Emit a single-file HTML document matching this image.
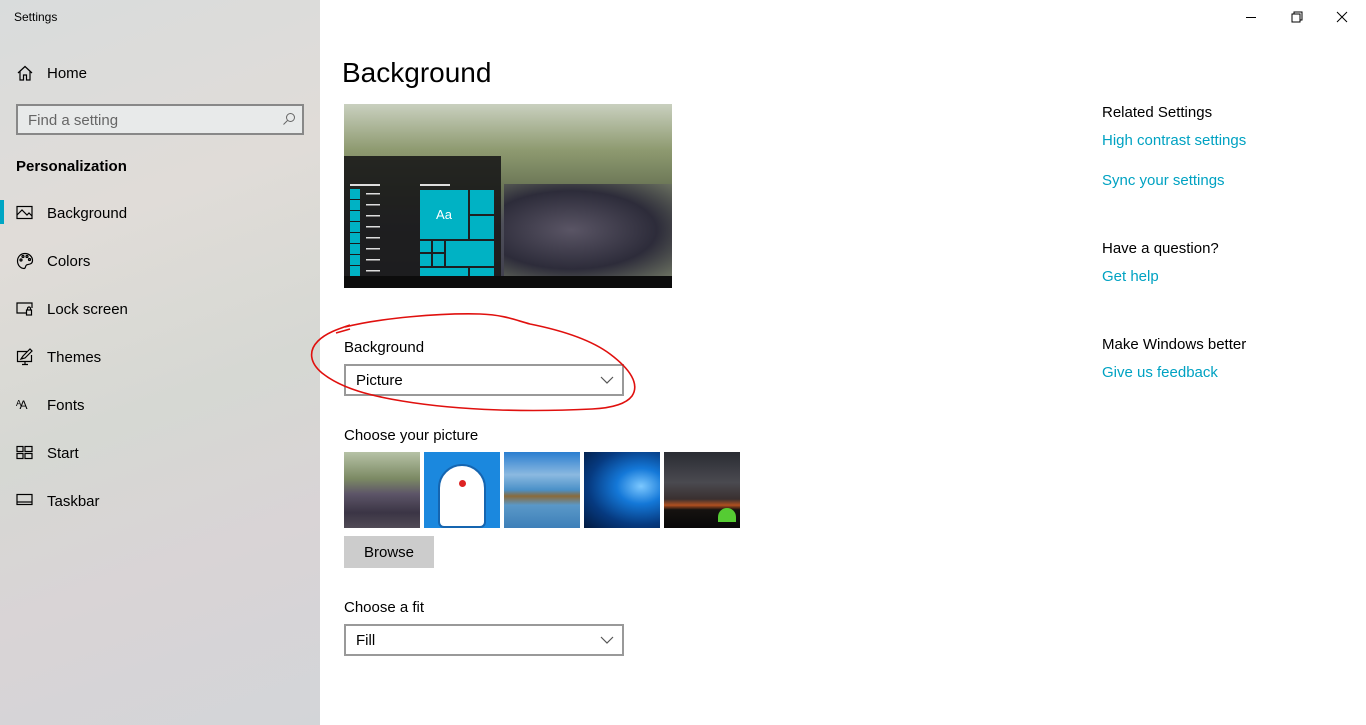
<!DOCTYPE html>
<html><head><meta charset="utf-8"><style>
*{margin:0;padding:0;box-sizing:border-box}
body{width:1366px;height:725px;overflow:hidden;font-family:"Liberation Sans",sans-serif;background:#fff;position:relative;color:#000}
.side{position:absolute;left:0;top:0;width:320px;height:725px;background:linear-gradient(160deg,#d9dcdc 0%,#e0dcd8 30%,#d6d8d3 55%,#d9d4d6 75%,#d3d5d8 100%)}
.abs{position:absolute}
.t{font-size:15px;color:#000}
.nav{position:absolute;left:47px;font-size:15px}
.ic{position:absolute;left:16px}
.link{color:#00a2c2;font-size:15px;position:absolute;left:1102px}
.hd{font-size:15px;position:absolute;left:1102px}
.sel{position:absolute;left:344px;width:280px;height:32px;border:2px solid #999;background:#fff}
.sel span{position:absolute;left:10px;top:6px;font-size:15px}
.sel svg{position:absolute;right:8px;top:10px}
.th{position:absolute;top:452px;width:76px;height:76px}
</style></head><body>
<div class="side"></div>
<div class="abs" style="left:14px;top:10px;font-size:12px">Settings</div>
<svg class="ic" style="top:64px" width="18" height="18" viewBox="0 0 18 18" fill="none" stroke="#000" stroke-width="1.2"><path d="M2 9L9 2.5 16 9M4 7.5V16h3.5v-5h3v5H14V7.5"/></svg>
<div class="nav" style="top:65px">Home</div>
<div class="abs" style="left:16px;top:104px;width:288px;height:31px;border:2px solid #888;background:#e8eaea"></div>
<div class="abs" style="left:28px;top:112px;font-size:15px;color:#666">Find a setting</div>
<svg class="abs" style="left:282px;top:112px" width="14" height="14" viewBox="0 0 14 14" fill="none" stroke="#666" stroke-width="1"><circle cx="8.5" cy="5.5" r="4"/><path d="M5.5 8.5L1.5 12.5"/></svg>
<div class="abs" style="left:16px;top:158px;font-size:15px;font-weight:bold">Personalization</div>
<div class="abs" style="left:0;top:200px;width:4px;height:24px;background:#00a6c4"></div>
<svg class="ic" style="top:205px" width="18" height="16" viewBox="0 0 18 16" fill="none" stroke="#000" stroke-width="1.2"><rect x="1" y="1.5" width="15" height="12"/><path d="M1 10l5-5 5 5 2-2 3 3"/></svg>
<div class="nav" style="top:205px">Background</div>
<svg class="ic" style="top:252px" width="18" height="18" viewBox="0 0 18 18" fill="none" stroke="#000" stroke-width="1.2"><path d="M9 1.5C4.5 1.5 1.5 5 1.5 9s3 7.5 6.5 7.5c2 0 1-2.5 2.5-3.5S16.5 13 16.5 8.5C16.5 4.5 13 1.5 9 1.5z"/><circle cx="5" cy="8" r="1"/><circle cx="7" cy="4.5" r="1"/><circle cx="11" cy="4.5" r="1"/><circle cx="13.5" cy="7.5" r="1"/></svg>
<div class="nav" style="top:253px">Colors</div>
<svg class="ic" style="top:301px" width="18" height="16" viewBox="0 0 18 16" fill="none" stroke="#000" stroke-width="1.2"><path d="M10 12H1V2h15v5"/><rect x="10.5" y="9" width="5" height="5"/><path d="M11.5 9V7.5a1.5 1.5 0 013 0V9"/></svg>
<div class="nav" style="top:301px">Lock screen</div>
<svg class="ic" style="top:348px" width="18" height="18" viewBox="0 0 18 18" fill="none" stroke="#000" stroke-width="1.2"><path d="M11 3.5H1.5v10h14V7M6 16.5h6M9 13.5v3"/><path d="M5 11l2-3 7-7 2 2-7 7z"/></svg>
<div class="nav" style="top:349px">Themes</div>
<div class="ic" style="top:398px;font-size:12px;letter-spacing:-2px">ᴬA</div>
<div class="nav" style="top:397px">Fonts</div>
<svg class="ic" style="top:445px" width="18" height="16" viewBox="0 0 18 16" fill="none" stroke="#000" stroke-width="1.2"><rect x="1" y="1.5" width="6" height="5"/><rect x="9" y="1.5" width="7" height="5"/><rect x="1" y="8.5" width="6" height="5"/><rect x="9" y="8.5" width="7" height="5"/></svg>
<div class="nav" style="top:445px">Start</div>
<svg class="ic" style="top:493px" width="18" height="14" viewBox="0 0 18 14" fill="none" stroke="#000" stroke-width="1.2"><rect x="1" y="1.5" width="15" height="10"/><path d="M1 9h15"/></svg>
<div class="nav" style="top:493px">Taskbar</div>

<svg class="abs" style="left:1240px;top:8px" width="120" height="18" fill="none" stroke="#000" stroke-width="1"><path d="M6 9.5h10"/><rect x="52" y="6" width="8" height="8"/><path d="M54 6V4h8v8h-2"/><path d="M97 4l10 10M107 4L97 14"/></svg>

<div class="abs" style="left:342px;top:57px;font-size:28px">Background</div>

<div class="abs" style="left:344px;top:104px;width:328px;height:184px;overflow:hidden;background:linear-gradient(180deg,#c9d0bf 0%,#8e9a70 25%,#6b7656 45%,#4e4f5a 65%,#3e3d4c 100%)">
 <div class="abs" style="left:160px;top:80px;width:168px;height:92px;background:radial-gradient(ellipse at 40% 50%,#5a5565 0%,#2d2c3a 60%,#6a7060 100%)"></div>
 <div class="abs" style="left:0;top:52px;width:157px;height:120px;background:rgba(25,25,25,0.9)"></div>
 <div class="abs" style="left:0;top:172px;width:328px;height:12px;background:#0c0c0c"></div>
 <div class="abs" style="left:6px;top:80px;width:30px;height:2px;background:#ddd"></div>
 <div class="abs" style="left:76px;top:80px;width:30px;height:2px;background:#ddd"></div>
 <div class="abs" style="left:6px;top:85px;width:10px;height:87px;background:repeating-linear-gradient(#00b2c4 0 10px,#191919 10px 11px)"></div>
 <div class="abs" style="left:22px;top:89px;width:14px;height:80px;background:repeating-linear-gradient(#ddd 0 1.5px,transparent 1.5px 11px)"></div>
 <div class="abs" style="left:76px;top:86px;width:48px;height:49px;background:#00b2c4;color:#fff;font-size:13px;text-align:center;line-height:49px">Aa</div>
 <div class="abs" style="left:126px;top:86px;width:24px;height:24px;background:#00b2c4"></div>
 <div class="abs" style="left:126px;top:112px;width:24px;height:23px;background:#00b2c4"></div>
 <div class="abs" style="left:76px;top:137px;width:11px;height:11px;background:#00b2c4"></div>
 <div class="abs" style="left:89px;top:137px;width:11px;height:11px;background:#00b2c4"></div>
 <div class="abs" style="left:76px;top:150px;width:11px;height:12px;background:#00b2c4"></div>
 <div class="abs" style="left:89px;top:150px;width:11px;height:12px;background:#00b2c4"></div>
 <div class="abs" style="left:102px;top:137px;width:48px;height:25px;background:#00b2c4"></div>
 <div class="abs" style="left:76px;top:164px;width:48px;height:8px;background:#00b2c4"></div>
 <div class="abs" style="left:126px;top:164px;width:24px;height:8px;background:#00b2c4"></div>
</div>

<div class="abs t" style="left:344px;top:339px">Background</div>
<div class="sel" style="top:364px"><span>Picture</span><svg width="14" height="8" fill="none" stroke="#555" stroke-width="1.2"><path d="M1 1l6 6 6-6"/></svg></div>
<svg class="abs" style="left:0;top:0" width="700" height="450" fill="none" stroke="#e0100e" stroke-width="1.6"><path d="M336 333l14-4"/><path d="M345 327C380 318 440 313 480 314c25 1 35 6 50 10 30 6 60 15 80 30 20 15 30 30 22 42-6 8-20 12-40 13-60 3-130 2-190-8-30-5-60-12-80-28-12-10-14-22-4-32 8-8 20-12 32-16"/></svg>

<div class="abs t" style="left:344px;top:427px">Choose your picture</div>
<div class="th" style="left:344px;background:linear-gradient(180deg,#b6c2a6 0%,#7c8a64 35%,#5d5568 55%,#3b3545 80%,#504a55 100%)"></div>
<div class="th" style="left:424px;background:#1b88de"><div class="abs" style="left:14px;top:12px;width:48px;height:64px;border-radius:24px 24px 6px 6px;background:#fff;border:2px solid #1565b0"></div><div class="abs" style="left:35px;top:28px;width:7px;height:7px;border-radius:50%;background:#d22"></div></div>
<div class="th" style="left:504px;background:linear-gradient(180deg,#2a7ed0 0%,#8bb9e0 30%,#4a90c8 50%,#8a6a3a 58%,#5a98c8 70%,#3d7fb8 100%)"></div>
<div class="th" style="left:584px;background:radial-gradient(ellipse at 75% 45%,#7cc8ff 0%,#1478d8 30%,#063a80 65%,#021a40 100%)"></div>
<div class="th" style="left:664px;background:linear-gradient(180deg,#2a2c33 0%,#4a4a50 40%,#3a3030 62%,#b05020 70%,#151210 76%,#080808 100%)"><div class="abs" style="left:54px;top:56px;width:18px;height:14px;background:#5c3;border-radius:10px 10px 0 0"></div></div>
<div class="abs" style="left:344px;top:536px;width:90px;height:32px;background:#ccc;font-size:15px;text-align:center;line-height:34px">Browse</div>

<div class="abs t" style="left:344px;top:599px">Choose a fit</div>
<div class="sel" style="top:624px"><span>Fill</span><svg width="14" height="8" fill="none" stroke="#555" stroke-width="1.2"><path d="M1 1l6 6 6-6"/></svg></div>

<div class="hd" style="top:104px">Related Settings</div>
<div class="link" style="top:132px">High contrast settings</div>
<div class="link" style="top:172px">Sync your settings</div>
<div class="hd" style="top:240px">Have a question?</div>
<div class="link" style="top:268px">Get help</div>
<div class="hd" style="top:336px">Make Windows better</div>
<div class="link" style="top:364px">Give us feedback</div>
</body></html>
